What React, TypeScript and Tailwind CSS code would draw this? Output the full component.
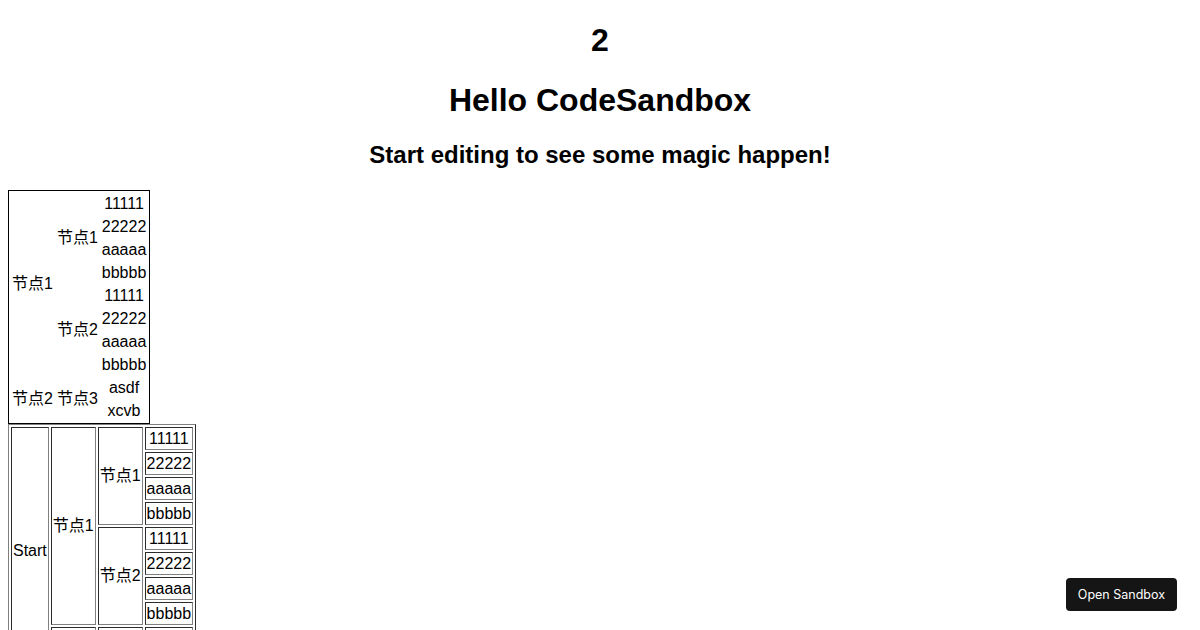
const groups = [
  {
    name: '节点1',
    children: [
      { name: '节点1', items: ['11111', '22222', 'aaaaa', 'bbbbb'] },
      { name: '节点2', items: ['11111', '22222', 'aaaaa', 'bbbbb'] },
    ],
  },
  {
    name: '节点2',
    children: [{ name: '节点3', items: ['asdf', 'xcvb'] }],
  },
];

const countRows = (g: (typeof groups)[number]) => g.children.reduce((n, c) => n + c.items.length, 0);
const totalRows = groups.reduce((n, g) => n + countRows(g), 0);

function Rows({ cell, withStart }: { cell: string; withStart?: boolean }) {
  const rows: React.ReactNode[] = [];
  groups.forEach((g, gi) => {
    g.children.forEach((c, ci) => {
      c.items.forEach((item, ii) => {
        rows.push(
          <tr key={`${gi}-${ci}-${ii}`}>
            {withStart && gi === 0 && ci === 0 && ii === 0 && (
              <td rowSpan={totalRows} className={cell}>
                Start
              </td>
            )}
            {ci === 0 && ii === 0 && (
              <td rowSpan={countRows(g)} className={cell}>
                {g.name}
              </td>
            )}
            {ii === 0 && (
              <td rowSpan={c.items.length} className={cell}>
                {c.name}
              </td>
            )}
            <td className={cell}>{item}</td>
          </tr>
        );
      });
    });
  });
  return <tbody>{rows}</tbody>;
}

export default function App() {
  return (
    <div className="min-h-[630px] bg-white px-2 text-center text-[16px] leading-[1.2] text-black [font-family:'Liberation_Sans','Noto_Sans_CJK_SC',sans-serif]">
      <h1 className="mt-[21.44px] mb-[21.44px] text-[32px] font-bold">2</h1>
      <h1 className="mb-[21.44px] text-[32px] font-bold">Hello CodeSandbox</h1>
      <h2 className="mb-[19.92px] text-[24px] font-bold">Start editing to see some magic happen!</h2>

      <table className="border-separate border-spacing-[2px] border border-black">
        <Rows cell="p-[1px] leading-[19px]" />
      </table>

      <table className="border-separate border-spacing-[2px] border border-[#808080] [border-style:outset]">
        <Rows cell="p-[1px] leading-[19px] border border-[#808080] [border-style:inset]" withStart />
      </table>

      <button className="fixed right-[23px] bottom-[19px] rounded-[4px] bg-[#151515] px-[12px] py-[8px] text-[12.5px] leading-[17px] text-white [font-family:Inter,sans-serif]">
        Open Sandbox
      </button>
    </div>
  );
}
